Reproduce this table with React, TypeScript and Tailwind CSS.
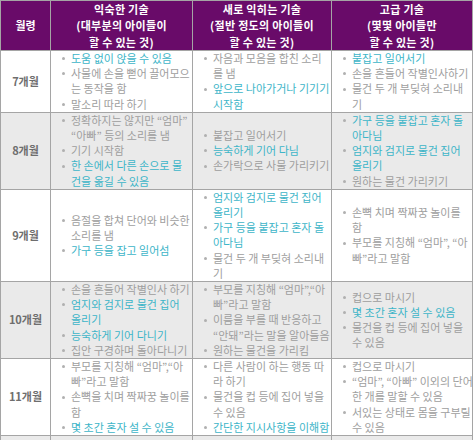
import React from 'react';

type Item = { c: 't' | 'g'; l: string[] };
type Row = { label: string; gray: boolean; cols: Item[][] };

const t = (...l: string[]): Item => ({ c: 't', l });
const g = (...l: string[]): Item => ({ c: 'g', l });

const rows: Row[] = [
  {
    label: '7개월',
    gray: false,
    cols: [
      [t('도움 없이 앉을 수 있음'), g('사물에 손을 뻗어 끌어모으', '는 동작을 함'), g('말소리 따라 하기')],
      [g('자음과 모음을 합친 소리', '를 냄'), t('앞으로 나아가거나 기기기', '시작함')],
      [t('붙잡고 일어서기'), g('손을 흔들어 작별인사하기'), g('물건 두 개 부딪혀 소리내', '기')],
    ],
  },
  {
    label: '8개월',
    gray: true,
    cols: [
      [
        g('정확하지는 않지만 “엄마”', '“아빠” 등의 소리를 냄'),
        g('기기 시작함'),
        t('한 손에서 다른 손으로 물', '건을 옮길 수 있음'),
      ],
      [g('붙잡고 일어서기'), t('능숙하게 기어 다님'), g('손가락으로 사물 가리키기')],
      [t('가구 등을 붙잡고 혼자 돌', '아다님'), t('엄지와 검지로 물건 집어', '올리기'), g('원하는 물건 가리키기')],
    ],
  },
  {
    label: '9개월',
    gray: false,
    cols: [
      [g('음절을 합쳐 단어와 비슷한', '소리를 냄'), t('가구 등을 잡고 일어섬')],
      [
        t('엄지와 검지로 물건 집어', '올리기'),
        t('가구 등을 붙잡고 혼자 돌', '아다님'),
        g('물건 두 개 부딪혀 소리내', '기'),
      ],
      [g('손뼉 치며 짝짜꿍 놀이를', '함'), g('부모를 지칭해 “엄마”, “아', '빠”라고 말함')],
    ],
  },
  {
    label: '10개월',
    gray: true,
    cols: [
      [
        g('손을 흔들어 작별인사 하기'),
        t('엄지와 검지로 물건 집어', '올리기'),
        t('능숙하게 기어 다니기'),
        g('집안 구경하며 돌아다니기'),
      ],
      [
        g('부모를 지칭해 “엄마”,“아', '빠”라고 말함'),
        g('이름을 부를 때 반응하고', '“안돼”라는 말을 알아들음'),
        g('원하는 물건을 가리킴'),
      ],
      [g('컵으로 마시기'), t('몇 초간 혼자 설 수 있음'), g('물건을 컵 등에 집어 넣을', '수 있음')],
    ],
  },
  {
    label: '11개월',
    gray: false,
    cols: [
      [
        g('부모를 지칭해 “엄마”,“아', '빠”라고 말함'),
        g('손뼉을 치며 짝짜꿍 놀이를', '함'),
        t('몇 초간 혼자 설 수 있음'),
      ],
      [
        g('다른 사람이 하는 행동 따', '라 하기'),
        g('물건을 컵 등에 집어 넣을', '수 있음'),
        t('간단한 지시사항을 이해함'),
      ],
      [
        g('컵으로 마시기'),
        g('“엄마”, “아빠” 이외의 단어', '한 개를 말할 수 있음'),
        g('서있는 상태로 몸을 구부릴', '수 있음'),
      ],
    ],
  },
];

const headers: string[][] = [
  ['익숙한 기술', '(대부분의 아이들이', '할 수 있는 것)'],
  ['새로 익히는 기술', '(절반 정도의 아이들이', '할 수 있는 것)'],
  ['고급 기술', '(몇몇 아이들만', '할 수 있는 것)'],
];

function Cell({ items, gray }: { items: Item[]; gray: boolean }) {
  return (
    <div className={`flex flex-col justify-center pl-[11px] ${gray ? 'bg-[#eaeaea]' : 'bg-white'}`}>
      {items.map((it, i) => (
        <div key={i} className="flex">
          <span className="flex h-[15.2px] w-[9px] shrink-0 items-center">
            <span className="h-[3px] w-[3px] rounded-full bg-[#b0b0b0]" />
          </span>
          <div className={`whitespace-nowrap ${it.c === 't' ? 'text-[#3db5c8]' : 'text-[#9e9e9e]'}`}>
            {it.l.map((line, j) => (
              <div key={j}>{line}</div>
            ))}
          </div>
        </div>
      ))}
    </div>
  );
}

export default function App() {
  return (
    <div className="h-[440px] w-[474px] overflow-hidden bg-white font-['Noto_Sans_CJK_KR',sans-serif] text-[11px] leading-[15.2px]">
      <div className="grid w-[473px] grid-cols-[49px_141px_138px_140px] gap-px border border-[#a5a5a5] bg-[#a5a5a5]">
        <div className="flex items-center justify-center bg-[#690b69] font-bold text-white">월령</div>
        {headers.map((h, i) => (
          <div
            key={i}
            className="flex h-[49px] flex-col items-center justify-center bg-[#690b69] font-bold leading-[16.3px] tracking-[0.3px] text-white"
          >
            {h.map((l, j) => (
              <div key={j}>{l}</div>
            ))}
          </div>
        ))}
        {rows.map((r) => (
          <React.Fragment key={r.label}>
            <div
              className={`flex items-center justify-center font-bold text-[#6e6e6e] ${r.gray ? 'bg-[#eaeaea]' : 'bg-white'}`}
            >
              {r.label}
            </div>
            {r.cols.map((items, i) => (
              <Cell key={i} items={items} gray={r.gray} />
            ))}
          </React.Fragment>
        ))}
        <div className="h-[20px] bg-[#eaeaea]" />
        <div className="h-[20px] bg-[#eaeaea]" />
        <div className="h-[20px] bg-[#eaeaea]" />
        <div className="h-[20px] bg-[#eaeaea]" />
      </div>
    </div>
  );
}
